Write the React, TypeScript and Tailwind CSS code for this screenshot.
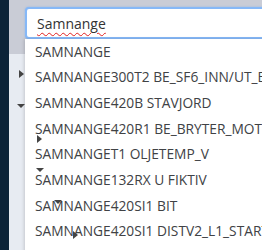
import React from "react";

const items = [
  "SAMNANGE",
  "SAMNANGE300T2 BE_SF6_INN/UT_BRYTER",
  "SAMNANGE420B STAVJORD",
  "SAMNANGE420R1 BE_BRYTER_MOTOR",
  "SAMNANGET1 OLJETEMP_V",
  "SAMNANGE132RX U FIKTIV",
  "SAMNANGE420SI1 BIT",
  "SAMNANGE420SI1 DISTV2_L1_START",
];

const RightTri = ({ x, y }: { x: number; y: number }) => (
  <div
    className="absolute w-0 h-0 border-y-[4px] border-y-transparent border-l-[5px] border-l-[#444]"
    style={{ left: x, top: y }}
  />
);

const DownTri = ({ x, y }: { x: number; y: number }) => (
  <div
    className="absolute w-0 h-0 border-x-[4px] border-x-transparent border-t-[4px] border-t-[#444]"
    style={{ left: x, top: y }}
  />
);

export default function App() {
  return (
    <div
      className="relative w-[262px] h-[250px] overflow-hidden flex"
      style={{ fontFamily: '"Open Sans", "Noto Sans", sans-serif' }}
    >
      <div className="w-[9px] bg-[#0c2338]" />
      <div className="flex-1 flex flex-col bg-[#e7ebf2]">
        <div className="h-[54px] bg-[#c9ccd6]" />
      </div>

      {/* tree toggles behind the popup */}
      <RightTri x={19} y={70} />
      <DownTri x={17} y={104} />

      <div className="absolute left-[25px] top-[7px] w-[260px] flex flex-col">
        <div className="h-[32px] bg-white border-2 border-[#86b8f7] rounded-[4px] shadow-[0_0_2px_rgba(96,165,250,0.6)] flex items-center pl-[10px]">
          <span className="text-[14px] text-[#333] underline decoration-wavy decoration-[#e02020] decoration-[1px] underline-offset-[3px]">
            Samnange
          </span>
        </div>
        <div className="bg-white h-[220px] shadow-[-1px_0_3px_rgba(0,0,0,0.15)] flex flex-col">
          {items.map((t) => (
            <div
              key={t}
              className="h-[25.7px] shrink-0 pl-[10px] flex items-center text-[13.75px] text-[#404245] whitespace-nowrap"
            >
              {t}
            </div>
          ))}
        </div>
      </div>

      {/* toggles showing through */}
      <RightTri x={37} y={135} />
      <DownTri x={36} y={168} />
      <DownTri x={54} y={200} />
      <RightTri x={73} y={231} />
    </div>
  );
}
